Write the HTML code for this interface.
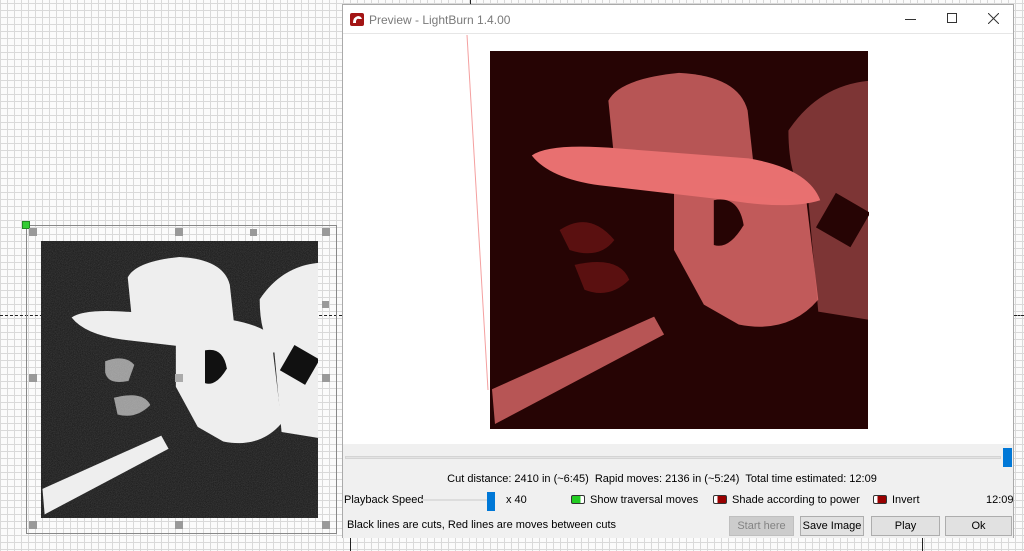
<!DOCTYPE html>
<html><head><meta charset="utf-8"><style>
*{margin:0;padding:0;box-sizing:border-box}
body{width:1024px;height:551px;overflow:hidden;position:relative;font-family:"Liberation Sans",sans-serif;font-size:11px;color:#000;
background-color:#fbfbfb;
background-image:linear-gradient(#d9d9d9 1px,transparent 1px),linear-gradient(90deg,#d9d9d9 1px,transparent 1px);
background-size:7px 7px;background-position:0 3px}
.abs{position:absolute}
.win{left:342px;top:4px;width:672px;height:534px;background:#fff;border:1px solid #aaa}
.tb{left:0;top:0;width:670px;height:29px;background:#fff;border-bottom:1px solid #e6e6e6}
.panel{left:0;top:439px;width:670px;height:94px;background:#f0f0f0}
.btn{top:511px;height:20px;border:1px solid #adadad;background:#e1e1e1;text-align:center;line-height:18px;font-size:11px}
.h{width:8px;height:8px;background:#999}
</style></head><body>
<div class="abs" style="left:0;top:315px;width:342px;border-top:1px dashed #222"></div>
<div class="abs" style="left:1014px;top:315px;width:10px;border-top:1px dashed #222"></div>
<div class="abs" style="left:350px;top:538px;height:13px;border-left:1px solid #222"></div>
<div class="abs" style="left:922px;top:538px;height:13px;border-left:1px solid #222"></div>
<div class="abs" style="left:470px;top:0;height:4px;border-left:1px solid #222"></div>

<div class="abs" style="left:26px;top:225px;width:311px;height:309px;border:1px solid #888"></div>
<svg class="abs" style="left:41px;top:241px" width="277" height="277" viewBox="0 0 380 380">
<defs><filter id="n"><feTurbulence type="fractalNoise" baseFrequency="0.9" numOctaves="1"/><feColorMatrix type="saturate" values="0"/></filter></defs>
<rect width="380" height="380" fill="#111"/>
<rect width="380" height="380" filter="url(#n)" opacity="0.3"/>
<g fill="#eee">
<path d="M119 50 Q130 28 190 22 Q250 25 259 60 L265 115 L125 110 Z"/>
<path d="M42 105 Q60 92 130 98 L260 108 Q320 118 332 150 Q300 160 240 150 L110 135 Q60 128 42 105Z"/>
<path d="M185 140 L318 150 L330 250 Q300 285 250 275 L215 255 L185 200 Z"/>
<path d="M300 80 Q330 35 380 30 L380 270 L330 262 L320 150 Q300 130 300 80Z"/>
<path d="M2 340 L165 267 L175 285 L5 375 Z"/>
<path d="M88 165 Q115 155 128 170 L120 192 Q92 198 88 180Z" opacity=".6"/>
<path d="M100 215 Q140 205 150 225 Q130 245 105 238Z" opacity=".6"/>
</g>
<g fill="#111"><path d="M225 150 Q250 145 255 175 Q240 200 225 195 Z"/><rect x="335" y="150" width="40" height="40" transform="rotate(30 355 170)"/></g>
</svg>
<div class="abs" style="left:22px;top:221px;width:8px;height:8px;background:#3c3;border:1px solid #282"></div>
<div class="abs h" style="left:29px;top:228px"></div>
<div class="abs h" style="left:175px;top:228px"></div>
<div class="abs h" style="left:250px;top:229px;width:7px;height:7px"></div>
<div class="abs h" style="left:322px;top:228px"></div>
<div class="abs h" style="left:322px;top:301px;width:7px;height:7px"></div>
<div class="abs h" style="left:29px;top:374px"></div>
<div class="abs h" style="left:322px;top:374px"></div>
<div class="abs h" style="left:175px;top:374px;background:#aaa"></div>
<div class="abs h" style="left:29px;top:521px"></div>
<div class="abs h" style="left:175px;top:521px"></div>
<div class="abs h" style="left:322px;top:521px"></div>

<div class="abs win">
 <div class="abs tb">
  <svg class="abs" style="left:7px;top:8px" width="14" height="13" viewBox="0 0 14 13"><rect width="14" height="13" rx="2" fill="#a31515"/><path d="M3 10 Q3 4 8 3 Q11 3 12 6 L9 6 Q7 5 6 8 L6 10Z" fill="#fff"/></svg>
  <div class="abs" style="left:26px;top:8px;font-size:12px;color:#7a7a7a">Preview - LightBurn 1.4.00</div>
  <div class="abs" style="left:562px;top:14px;width:11px;border-top:1px solid #333"></div>
  <div class="abs" style="left:604px;top:8px;width:10px;height:10px;border:1px solid #333"></div>
  <svg class="abs" style="left:645px;top:8px" width="11" height="11"><path d="M0 0L11 11M11 0L0 11" stroke="#333" stroke-width="1"/></svg>
 </div>
 <svg class="abs" style="left:120px;top:30px" width="30" height="370"><path d="M4 0 L25 355" stroke="#f4a0a0" stroke-width="1"/></svg>
 <svg class="abs" style="left:146px;top:46px" width="380" height="378" viewBox="0 0 380 380">
 <rect width="380" height="380" fill="#260404"/>
 <g fill="#e87070">
 <path d="M119 50 Q130 28 190 22 Q250 25 259 60 L265 115 L125 110 Z" opacity=".75"/>
 <path d="M42 105 Q60 92 130 98 L260 108 Q320 118 332 150 Q300 160 240 150 L110 135 Q60 128 42 105Z"/>
 <path d="M185 140 L318 150 L330 250 Q300 285 250 275 L215 255 L185 200 Z" opacity=".8"/>
 <path d="M300 80 Q330 35 380 30 L380 270 L330 262 L320 150 Q300 130 300 80Z" opacity=".45"/>
 <path d="M2 340 L165 267 L175 285 L5 375 Z" opacity=".75"/>
 </g>
 <g fill="#5a1010"><path d="M70 180 Q100 160 125 190 Q110 210 80 200Z"/><path d="M85 215 Q130 205 140 230 Q120 250 95 240Z"/></g>
 <g fill="#260404"><path d="M225 150 Q250 145 255 175 Q240 200 225 195 Z"/><rect x="335" y="150" width="40" height="40" transform="rotate(30 355 170)"/></g>
 </svg>
 <div class="abs panel">
  <div class="abs" style="left:2px;top:12px;width:656px;height:3px;background:#e3e3e3;border:1px solid #d4d4d4"></div>
  <div class="abs" style="left:660px;top:4px;width:9px;height:19px;background:#0078d7"></div>
  <div class="abs" style="left:-16px;top:29px;width:670px;text-align:center;font-size:11px">Cut distance: 2410 in (~6:45)&nbsp; Rapid moves: 2136 in (~5:24)&nbsp; Total time estimated: 12:09</div>
  <div class="abs" style="left:1px;top:50px">Playback Speed</div>
  <div class="abs" style="left:78px;top:55px;width:70px;height:2px;background:#ddd"></div>
  <div class="abs" style="left:144px;top:48px;width:8px;height:19px;background:#0078d7"></div>
  <div class="abs" style="left:163px;top:50px">x 40</div>
  <div class="abs" style="left:228px;top:51px;width:14px;height:9px;border:1px solid #333;border-radius:2px;background:linear-gradient(90deg,#2c2 70%,#fff 70%)"></div>
  <div class="abs" style="left:247px;top:50px">Show traversal moves</div>
  <div class="abs" style="left:370px;top:51px;width:14px;height:9px;border:1px solid #333;border-radius:2px;background:linear-gradient(90deg,#fff 30%,#900 30%)"></div>
  <div class="abs" style="left:389px;top:50px">Shade according to power</div>
  <div class="abs" style="left:530px;top:51px;width:14px;height:9px;border:1px solid #333;border-radius:2px;background:linear-gradient(90deg,#fff 30%,#900 30%)"></div>
  <div class="abs" style="left:549px;top:50px">Invert</div>
  <div class="abs" style="left:643px;top:50px">12:09</div>
  <div class="abs" style="left:4px;top:75px">Black lines are cuts, Red lines are moves between cuts</div>
 </div>
 <div class="abs btn" style="left:386px;width:65px;background:#ccc;border-color:#bfbfbf;color:#838383">Start here</div>
 <div class="abs btn" style="left:457px;width:64px">Save Image</div>
 <div class="abs btn" style="left:528px;width:69px">Play</div>
 <div class="abs btn" style="left:602px;width:67px">Ok</div>
</div>
</body></html>
